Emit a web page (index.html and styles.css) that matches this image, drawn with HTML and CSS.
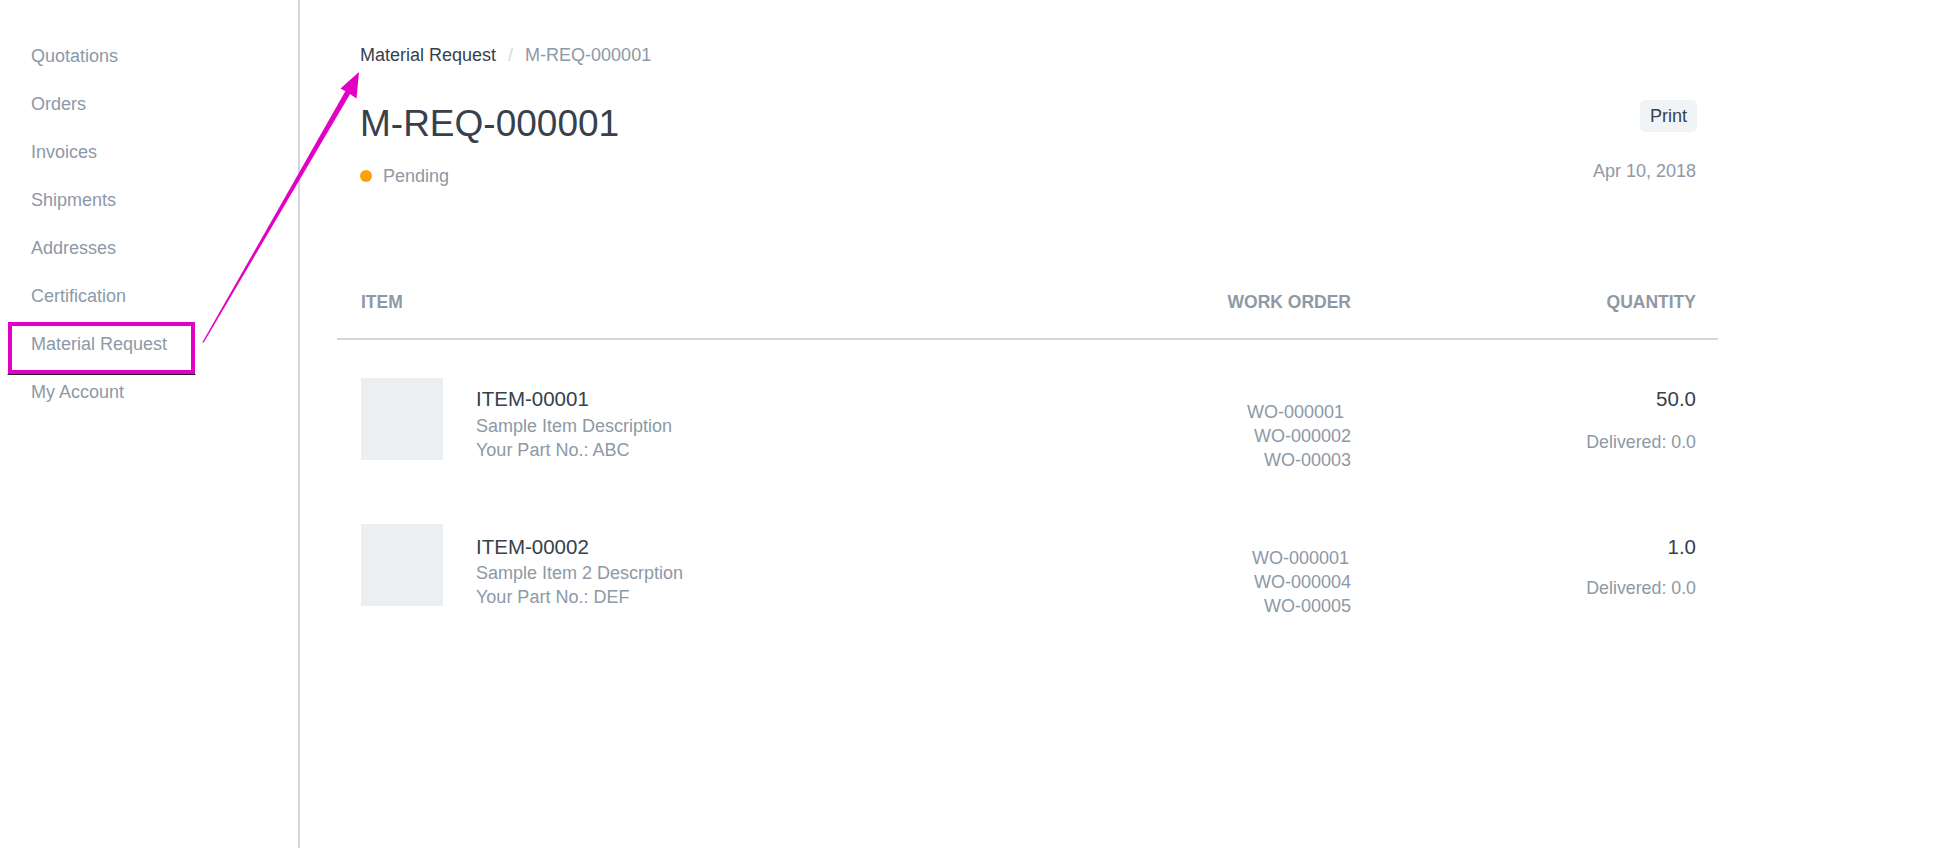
FILE: index.html
```html
<!DOCTYPE html>
<html lang="en">
<head>
<meta charset="utf-8">
<title>M-REQ-000001</title>
<link rel="stylesheet" href="styles.css">
</head>
<body>
<div class="layout">
  <aside class="sidebar">
    <nav class="nav">
      <a class="nav-item">Quotations</a>
      <a class="nav-item">Orders</a>
      <a class="nav-item">Invoices</a>
      <a class="nav-item">Shipments</a>
      <a class="nav-item">Addresses</a>
      <a class="nav-item">Certification</a>
      <a class="nav-item">Material Request</a>
      <a class="nav-item">My Account</a>
    </nav>
  </aside>
  <main class="main">
    <div class="page-head">
      <div class="breadcrumb">
        <span class="crumb-link">Material Request</span><span class="crumb-sep">/</span><span class="crumb-current">M-REQ-000001</span>
      </div>
      <div class="title-row">
        <div class="title-left">
          <h1 class="title">M-REQ-000001</h1>
          <div class="status"><span class="dot"></span><span>Pending</span></div>
        </div>
        <div class="title-right">
          <button class="btn-print">Print</button>
          <div class="date">Apr 10, 2018</div>
        </div>
      </div>
    </div>
    <div class="table">
      <div class="thead">
        <div class="th">ITEM</div>
        <div class="th right">WORK ORDER</div>
        <div class="th right">QUANTITY</div>
      </div>
      <div class="row">
        <div class="item">
          <div class="thumb"></div>
          <div class="item-text">
            <div class="item-name">ITEM-00001</div>
            <div class="muted">Sample Item Description</div>
            <div class="muted">Your Part No.: ABC</div>
          </div>
        </div>
        <div class="wo">
          <div class="wo-line shift">WO-000001</div>
          <div class="wo-line">WO-000002</div>
          <div class="wo-line">WO-00003</div>
        </div>
        <div class="qty">
          <div class="qty-num">50.0</div>
          <div class="delivered">Delivered: 0.0</div>
        </div>
      </div>
      <div class="row row-2">
        <div class="item">
          <div class="thumb"></div>
          <div class="item-text">
            <div class="item-name">ITEM-00002</div>
            <div class="muted">Sample Item 2 Descrption</div>
            <div class="muted">Your Part No.: DEF</div>
          </div>
        </div>
        <div class="wo">
          <div class="wo-line shift-sm">WO-000001</div>
          <div class="wo-line">WO-000004</div>
          <div class="wo-line">WO-00005</div>
        </div>
        <div class="qty">
          <div class="qty-num">1.0</div>
          <div class="delivered">Delivered: 0.0</div>
        </div>
      </div>
    </div>
  </main>
</div>
<svg class="annotation" width="1940" height="848" viewBox="0 0 1940 848" xmlns="http://www.w3.org/2000/svg">
  <rect x="7.5" y="374" width="188" height="1" fill="#222"/>
  <rect x="10" y="324" width="183" height="48" fill="none" stroke="#e200c4" stroke-width="4"/>
  <polygon points="202.4,342.3 203.6,342.8 350.4,93.6 345.6,90.8" fill="#e200c4"/>
  <polygon points="359,72 356.5,98.5 348.5,93 340.5,88.5" fill="#e200c4"/>
</svg>
</body>
</html>
```

FILE: styles.css
```css
* { box-sizing: border-box; }

html, body {
  margin: 0;
  padding: 0;
  background: #ffffff;
}

body {
  font-family: "Liberation Sans", Arial, Helvetica, sans-serif;
  font-size: 18px;
  color: #36414c;
  position: relative;
  width: 1940px;
  height: 848px;
  overflow: hidden;
}

.layout {
  display: flex;
  min-height: 848px;
}

.sidebar {
  width: 300px;
  flex: 0 0 300px;
  border-right: 2px solid #d1d8dd;
  padding: 44px 0 0 31px;
}

.nav {
  display: flex;
  flex-direction: column;
  gap: 24px;
}

.nav-item {
  color: #8d99a6;
  font-size: 18px;
  line-height: 24px;
  text-decoration: none;
}

.main {
  width: 1417px;
  padding: 43px 0 0 37px;
}

.page-head {
  padding: 0 21px 0 23px;
}

.breadcrumb {
  line-height: 24px;
  font-size: 18px;
}

.crumb-link { color: #36414c; }
.crumb-sep { color: #d1d8dd; margin: 0 12px; }
.crumb-current { color: #8d99a6; }

.title-row {
  display: flex;
  justify-content: space-between;
  align-items: flex-start;
  margin-top: 33px;
}

.title-left {
  display: flex;
  flex-direction: column;
}

.title {
  margin: 2px 0 0 0;
  font-size: 37px;
  line-height: 43px;
  font-weight: 400;
  color: #36414c;
}

.status {
  margin-top: 19px;
  display: flex;
  align-items: center;
  line-height: 24px;
  color: #8d99a6;
}

.dot {
  width: 12px;
  height: 12px;
  border-radius: 50%;
  background: #ffa00a;
  margin-right: 11px;
}

.title-right {
  display: flex;
  flex-direction: column;
  align-items: flex-end;
}

.btn-print {
  font-family: inherit;
  font-size: 18px;
  line-height: 32px;
  height: 32px;
  padding: 0 10px;
  border: none;
  border-radius: 5px;
  background: #f0f4f7;
  color: #36414c;
  margin-right: -1px;
}

.date {
  margin-top: 27px;
  line-height: 24px;
  color: #8d99a6;
}

.table {
  margin-top: 102px;
  width: 1381px;
}

.thead,
.row {
  display: grid;
  grid-template-columns: 1fr 300px 345px;
  padding: 0 22px 0 24px;
}

.thead {
  border-bottom: 2px solid #d1d8dd;
  padding-bottom: 24px;
}

.th {
  font-size: 17.5px;
  font-weight: 700;
  line-height: 24px;
  color: #8d99a6;
}

.right { text-align: right; }

.row {
  padding-top: 38px;
  padding-bottom: 14px;
  align-items: start;
}

.item {
  display: flex;
  align-items: flex-start;
  gap: 33px;
}

.thumb {
  width: 82px;
  height: 82px;
  background: #ebeff2;
  flex: 0 0 82px;
}

.item-text {
  margin-top: 6px;
  display: flex;
  flex-direction: column;
}

.row-2 .item-text { margin-top: 8px; }

.item-name {
  font-size: 20.5px;
  line-height: 30px;
  color: #36414c;
}

.row-2 .item-name { margin-bottom: -1px; }

.muted {
  color: #8d99a6;
  line-height: 24px;
}

.wo {
  padding-top: 22px;
  text-align: right;
  color: #8d99a6;
}

.wo-line { line-height: 24px; }
.shift { margin-right: 7px; }
.shift-sm { margin-right: 2px; }

.qty {
  text-align: right;
  padding-top: 6px;
}

.row-2 .qty { padding-top: 8px; }

.qty-num {
  font-size: 20.5px;
  line-height: 30px;
  color: #36414c;
}

.delivered {
  margin-top: 16px;
  font-size: 17.8px;
  line-height: 24px;
  color: #8d99a6;
}

.row-2 .delivered { margin-top: 14px; }

.annotation {
  position: absolute;
  left: 0;
  top: 0;
  pointer-events: none;
}
```
